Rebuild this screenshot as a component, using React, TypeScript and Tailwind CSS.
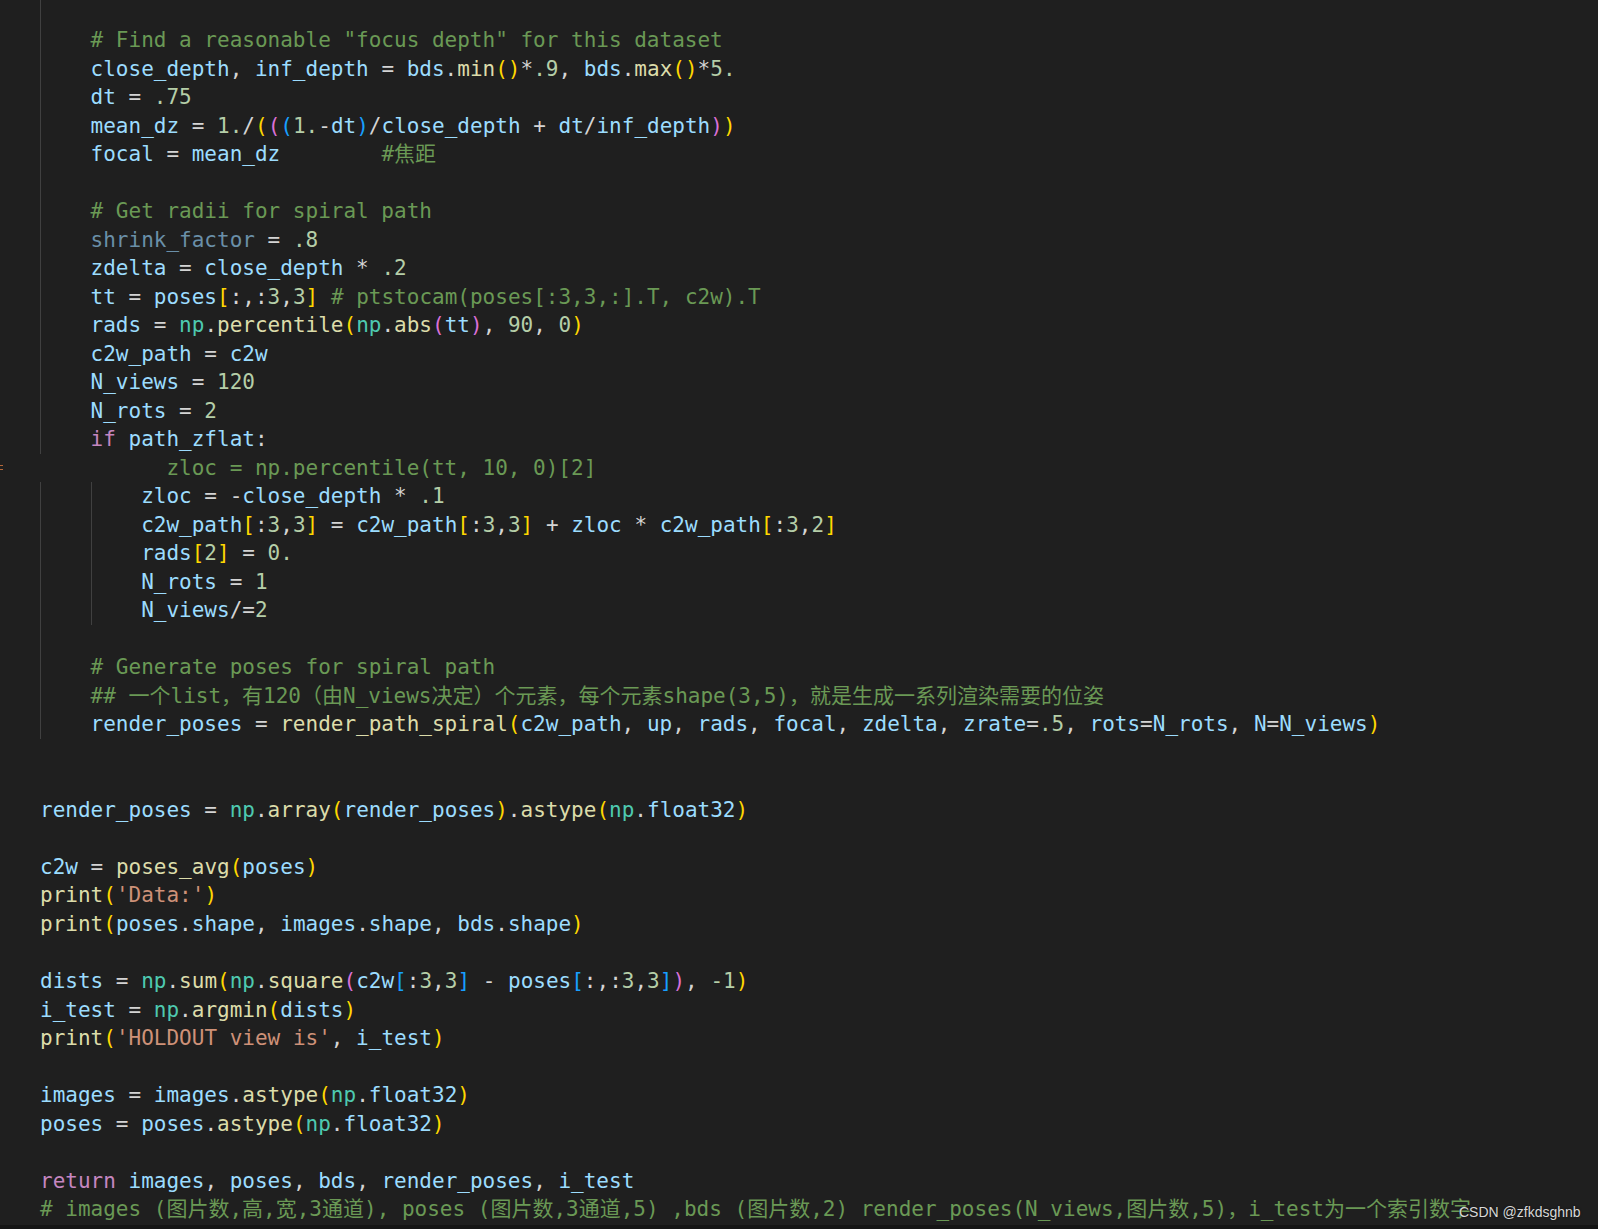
const C = {
  v: "text-[#9cdcfe]",
  f: "text-[#dcdcaa]",
  c: "text-[#6a9955]",
  n: "text-[#b5cea8]",
  s: "text-[#ce9178]",
  k: "text-[#c586c0]",
  t: "text-[#4ec9b0]",
  o: "text-[#d4d4d4]",
  b1: "text-[#ffd700]",
  b2: "text-[#da70d6]",
  b3: "text-[#179fff]",
  d: "text-[#6a8fa8]",
};

type Tok = [keyof typeof C, string];
type Line = { g?: number; i?: number; mark?: boolean; t: Tok[] };

const lines: Line[] = [
  { g: 1, t: [["c", '# Find a reasonable "focus depth" for this dataset']] },
  {
    g: 1,
    t: [
      ["v", "close_depth"], ["o", ", "], ["v", "inf_depth"], ["o", " = "], ["v", "bds"], ["o", "."], ["f", "min"],
      ["b1", "()"], ["o", "*"], ["n", ".9"], ["o", ", "], ["v", "bds"], ["o", "."], ["f", "max"], ["b1", "()"], ["o", "*"], ["n", "5."],
    ],
  },
  { g: 1, t: [["v", "dt"], ["o", " = "], ["n", ".75"]] },
  {
    g: 1,
    t: [
      ["v", "mean_dz"], ["o", " = "], ["n", "1."], ["o", "/"], ["b1", "("], ["b2", "("], ["b3", "("], ["n", "1."], ["o", "-"], ["v", "dt"],
      ["b3", ")"], ["o", "/"], ["v", "close_depth"], ["o", " + "], ["v", "dt"], ["o", "/"], ["v", "inf_depth"], ["b2", ")"], ["b1", ")"],
    ],
  },
  { g: 1, t: [["v", "focal"], ["o", " = "], ["v", "mean_dz"], ["o", "        "], ["c", "#焦距"]] },
  { g: 1, t: [] },
  { g: 1, t: [["c", "# Get radii for spiral path"]] },
  { g: 1, t: [["d", "shrink_factor"], ["o", " = "], ["n", ".8"]] },
  { g: 1, t: [["v", "zdelta"], ["o", " = "], ["v", "close_depth"], ["o", " * "], ["n", ".2"]] },
  {
    g: 1,
    t: [
      ["v", "tt"], ["o", " = "], ["v", "poses"], ["b1", "["], ["o", ":,:"], ["n", "3"], ["o", ","], ["n", "3"], ["b1", "]"],
      ["c", " # ptstocam(poses[:3,3,:].T, c2w).T"],
    ],
  },
  {
    g: 1,
    t: [
      ["v", "rads"], ["o", " = "], ["t", "np"], ["o", "."], ["f", "percentile"], ["b1", "("], ["t", "np"], ["o", "."], ["f", "abs"],
      ["b2", "("], ["v", "tt"], ["b2", ")"], ["o", ", "], ["n", "90"], ["o", ", "], ["n", "0"], ["b1", ")"],
    ],
  },
  { g: 1, t: [["v", "c2w_path"], ["o", " = "], ["v", "c2w"]] },
  { g: 1, t: [["v", "N_views"], ["o", " = "], ["n", "120"]] },
  { g: 1, t: [["v", "N_rots"], ["o", " = "], ["n", "2"]] },
  { g: 1, t: [["k", "if"], ["o", " "], ["v", "path_zflat"], ["o", ":"]] },
  { i: 10, mark: true, t: [["c", "zloc = np.percentile(tt, 10, 0)[2]"]] },
  { g: 2, t: [["v", "zloc"], ["o", " = -"], ["v", "close_depth"], ["o", " * "], ["n", ".1"]] },
  {
    g: 2,
    t: [
      ["v", "c2w_path"], ["b1", "["], ["o", ":"], ["n", "3"], ["o", ","], ["n", "3"], ["b1", "]"], ["o", " = "],
      ["v", "c2w_path"], ["b1", "["], ["o", ":"], ["n", "3"], ["o", ","], ["n", "3"], ["b1", "]"], ["o", " + "], ["v", "zloc"], ["o", " * "],
      ["v", "c2w_path"], ["b1", "["], ["o", ":"], ["n", "3"], ["o", ","], ["n", "2"], ["b1", "]"],
    ],
  },
  { g: 2, t: [["v", "rads"], ["b1", "["], ["n", "2"], ["b1", "]"], ["o", " = "], ["n", "0."]] },
  { g: 2, t: [["v", "N_rots"], ["o", " = "], ["n", "1"]] },
  { g: 2, t: [["v", "N_views"], ["o", "/="], ["n", "2"]] },
  { g: 1, t: [] },
  { g: 1, t: [["c", "# Generate poses for spiral path"]] },
  { g: 1, t: [["c", "## 一个list，有120（由N_views决定）个元素，每个元素shape(3,5)，就是生成一系列渲染需要的位姿"]] },
  {
    g: 1,
    t: [
      ["v", "render_poses"], ["o", " = "], ["f", "render_path_spiral"], ["b1", "("], ["v", "c2w_path"], ["o", ", "], ["v", "up"], ["o", ", "],
      ["v", "rads"], ["o", ", "], ["v", "focal"], ["o", ", "], ["v", "zdelta"], ["o", ", "], ["v", "zrate"], ["o", "="], ["n", ".5"], ["o", ", "],
      ["v", "rots"], ["o", "="], ["v", "N_rots"], ["o", ", "], ["v", "N"], ["o", "="], ["v", "N_views"], ["b1", ")"],
    ],
  },
  { t: [] },
  { t: [] },
  {
    t: [
      ["v", "render_poses"], ["o", " = "], ["t", "np"], ["o", "."], ["f", "array"], ["b1", "("], ["v", "render_poses"], ["b1", ")"], ["o", "."],
      ["f", "astype"], ["b1", "("], ["t", "np"], ["o", "."], ["v", "float32"], ["b1", ")"],
    ],
  },
  { t: [] },
  { t: [["v", "c2w"], ["o", " = "], ["f", "poses_avg"], ["b1", "("], ["v", "poses"], ["b1", ")"]] },
  { t: [["f", "print"], ["b1", "("], ["s", "'Data:'"], ["b1", ")"]] },
  {
    t: [
      ["f", "print"], ["b1", "("], ["v", "poses"], ["o", "."], ["v", "shape"], ["o", ", "], ["v", "images"], ["o", "."], ["v", "shape"],
      ["o", ", "], ["v", "bds"], ["o", "."], ["v", "shape"], ["b1", ")"],
    ],
  },
  { t: [] },
  {
    t: [
      ["v", "dists"], ["o", " = "], ["t", "np"], ["o", "."], ["f", "sum"], ["b1", "("], ["t", "np"], ["o", "."], ["f", "square"], ["b2", "("],
      ["v", "c2w"], ["b3", "["], ["o", ":"], ["n", "3"], ["o", ","], ["n", "3"], ["b3", "]"], ["o", " - "], ["v", "poses"], ["b3", "["],
      ["o", ":,:"], ["n", "3"], ["o", ","], ["n", "3"], ["b3", "]"], ["b2", ")"], ["o", ", "], ["n", "-1"], ["b1", ")"],
    ],
  },
  { t: [["v", "i_test"], ["o", " = "], ["t", "np"], ["o", "."], ["f", "argmin"], ["b1", "("], ["v", "dists"], ["b1", ")"]] },
  { t: [["f", "print"], ["b1", "("], ["s", "'HOLDOUT view is'"], ["o", ", "], ["v", "i_test"], ["b1", ")"]] },
  { t: [] },
  {
    t: [
      ["v", "images"], ["o", " = "], ["v", "images"], ["o", "."], ["f", "astype"], ["b1", "("], ["t", "np"], ["o", "."], ["v", "float32"], ["b1", ")"],
    ],
  },
  {
    t: [
      ["v", "poses"], ["o", " = "], ["v", "poses"], ["o", "."], ["f", "astype"], ["b1", "("], ["t", "np"], ["o", "."], ["v", "float32"], ["b1", ")"],
    ],
  },
  { t: [] },
  {
    t: [
      ["k", "return"], ["o", " "], ["v", "images"], ["o", ", "], ["v", "poses"], ["o", ", "], ["v", "bds"], ["o", ", "],
      ["v", "render_poses"], ["o", ", "], ["v", "i_test"],
    ],
  },
  { t: [["c", "# images (图片数,高,宽,3通道), poses (图片数,3通道,5) ,bds (图片数,2) render_poses(N_views,图片数,5)，i_test为一个索引数字"]] },
];

function Guide() {
  return <span className="w-[4ch] h-full shrink-0 border-l border-[#404040]" />;
}

function CodeLine({ line }: { line: Line }) {
  const guides = Array.from({ length: line.g ?? 0 });
  return (
    <div className="flex h-[28.53px] leading-[28.53px] whitespace-pre">
      <div className="w-[40px] shrink-0 flex items-center">
        {line.mark && <span className="block w-[3px] h-[5px] border-y border-[#b5683a]" />}
      </div>
      {guides.map((_, k) => (
        <Guide key={k} />
      ))}
      <span>
        {" ".repeat(line.i ?? 0)}
        {line.t.map(([c, s], k) => (
          <span key={k} className={C[c]}>
            {s}
          </span>
        ))}
      </span>
    </div>
  );
}

export default function App() {
  return (
    <div className="relative flex flex-col w-full h-[1229px] overflow-hidden bg-[#1f1f1f] text-[21px] font-['DejaVu_Sans_Mono','Noto_Sans_CJK_SC',monospace] text-[#d4d4d4]">
      <div className="flex h-[26px] shrink-0">
        <div className="w-[40px] shrink-0" />
        <Guide />
      </div>
      {lines.map((l, k) => (
        <CodeLine key={k} line={l} />
      ))}
      <div className="flex-1" />
      <div className="h-[4px] shrink-0 bg-[#151515]" />

      <div className="absolute left-[1459px] top-[1202px] text-[14px] leading-[20px] font-['Liberation_Sans',sans-serif] text-[#d8d8d8] [text-shadow:0_0_2px_rgba(0,0,0,0.6)]">
        CSDN @zfkdsghnb
      </div>
    </div>
  );
}
